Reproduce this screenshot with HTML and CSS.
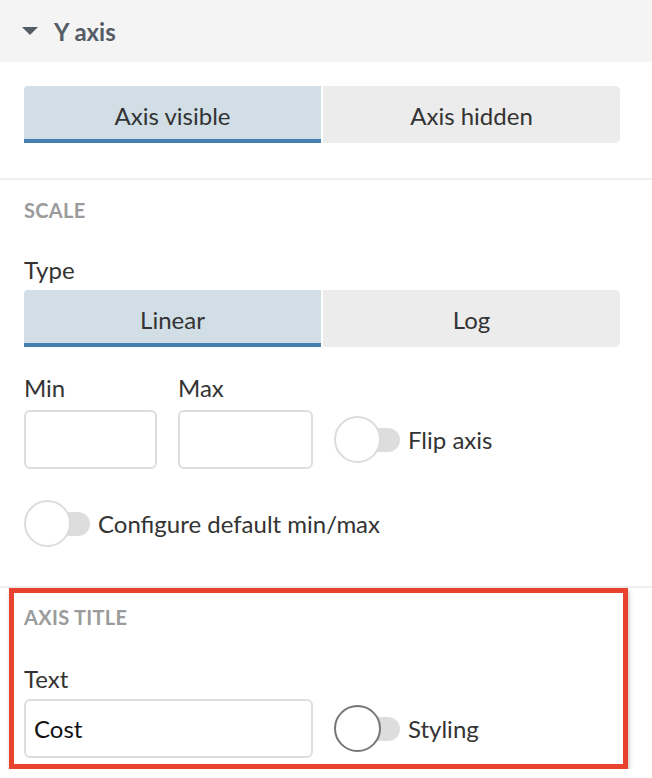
FILE: index.html
```html
<!DOCTYPE html>
<html lang="en">
<head>
    <meta charset="UTF-8">
    <meta name="viewport" content="width=device-width, initial-scale=1.0">
    <title>Y axis settings</title>
    <link rel="stylesheet" href="styles.css">
</head>
<body>
    <div class="panel-header">
        <svg class="caret" width="16" height="8" viewBox="0 0 16 8"><path d="M0 0 H16 L8 8 Z" fill="#545d66"/></svg>
        <span>Y axis</span>
    </div>

    <div class="section section-visibility">
        <div class="segmented">
            <button class="seg active">Axis visible</button>
            <button class="seg">Axis hidden</button>
        </div>
    </div>

    <div class="section section-scale">
        <div class="section-title">SCALE</div>
        <div class="field-label label-type">Type</div>
        <div class="segmented">
            <button class="seg active">Linear</button>
            <button class="seg">Log</button>
        </div>

        <div class="range-row">
            <div class="field field-min">
                <div class="field-label">Min</div>
                <input class="text-input" type="text">
            </div>
            <div class="field field-max">
                <div class="field-label">Max</div>
                <input class="text-input" type="text">
            </div>
            <label class="toggle toggle-row">
                <span class="switch"><span class="knob"></span></span>
                <span>Flip axis</span>
            </label>
        </div>

        <label class="toggle toggle-default">
            <span class="switch"><span class="knob"></span></span>
            <span>Configure default min/max</span>
        </label>
    </div>

    <div class="section section-title-box">
        <div class="section-title">AXIS TITLE</div>
        <div class="field-label label-text">Text</div>
        <div class="title-row">
            <input class="text-input title-input" type="text" value="Cost">
            <label class="toggle">
                <span class="switch"><span class="knob knob-focus"></span></span>
                <span>Styling</span>
            </label>
        </div>
    </div>
</body>
</html>
```

FILE: styles.css
```css
body {
    margin: 0;
    font-family: Lato, "Open Sans", sans-serif;
    font-size: 24px;
    color: #333;
    background: #fff;
}
.panel-header {
    height: 62px;
    background: #f4f4f4;
    display: flex;
    align-items: center;
    padding-left: 22px;
    gap: 16px;
    color: #545d66;
    font-weight: bold;
    font-size: 24px;
}
.caret {
    margin-top: -1px;
}
.section {
    border-bottom: 2px solid #eeeeee;
}
.section-visibility {
    padding: 24px 32px 35px 24px;
}
.section-scale {
    padding: 18px 32px 39px 24px;
}
.section-title {
    font-size: 20px;
    line-height: 24px;
    font-weight: bold;
    color: #9b9b9b;
    letter-spacing: 0.3px;
}
.field-label {
    line-height: 30px;
}
.label-type {
    margin-top: 33px;
    margin-bottom: 5px;
}
.segmented {
    display: flex;
    gap: 2px;
}
.seg {
    flex: 1;
    height: 57px;
    border: none;
    border-bottom: 4px solid transparent;
    background: #ececec;
    font-family: inherit;
    font-size: 24px;
    color: #333;
    padding: 5px 0 0;
    border-radius: 0 5px 5px 0;
}
.seg.active {
    background: #d1dee6;
    border-bottom-color: #4581b0;
    border-radius: 4px 0 0 0;
}
.range-row {
    display: flex;
    align-items: flex-end;
    margin-top: 26px;
}
.field .field-label {
    margin-bottom: 7px;
}
.field-min {
    width: 133px;
    margin-right: 21px;
}
.field-max {
    width: 135px;
    margin-right: 21px;
}
.text-input {
    display: block;
    box-sizing: border-box;
    width: 100%;
    height: 59px;
    border: 2px solid #dedede;
    border-radius: 6px;
    padding: 0 9px;
    font-family: inherit;
    font-size: 24px;
    color: #111;
    background: #fff;
    outline: none;
}
.toggle {
    display: flex;
    align-items: center;
    gap: 8px;
}
.toggle-row {
    margin-bottom: 6px;
}
.toggle-default {
    margin-top: 31px;
}
.switch {
    position: relative;
    width: 66px;
    height: 47px;
    flex: none;
}
.switch::before {
    content: "";
    position: absolute;
    left: 20px;
    right: 0;
    top: 12px;
    height: 24px;
    border-radius: 12px;
    background: #dddddd;
}
.knob {
    position: absolute;
    left: 0;
    top: 0;
    width: 47px;
    height: 47px;
    box-sizing: border-box;
    border-radius: 50%;
    border: 2px solid #dcdcdc;
    background: #fff;
}
.knob-focus {
    border-color: #767676;
}
.section-title-box {
    border: 5px solid #e8432e;
    margin: 0 24px 0 9px;
    padding: 12px 0 6px 10px;
    box-shadow: 1px 3px 4px rgba(0, 0, 0, 0.25);
}
.label-text {
    margin-top: 35px;
    margin-bottom: 5px;
}
.title-row {
    display: flex;
    align-items: center;
    gap: 21px;
}
.title-input {
    width: 289px;
    padding-left: 8px;
}
```
